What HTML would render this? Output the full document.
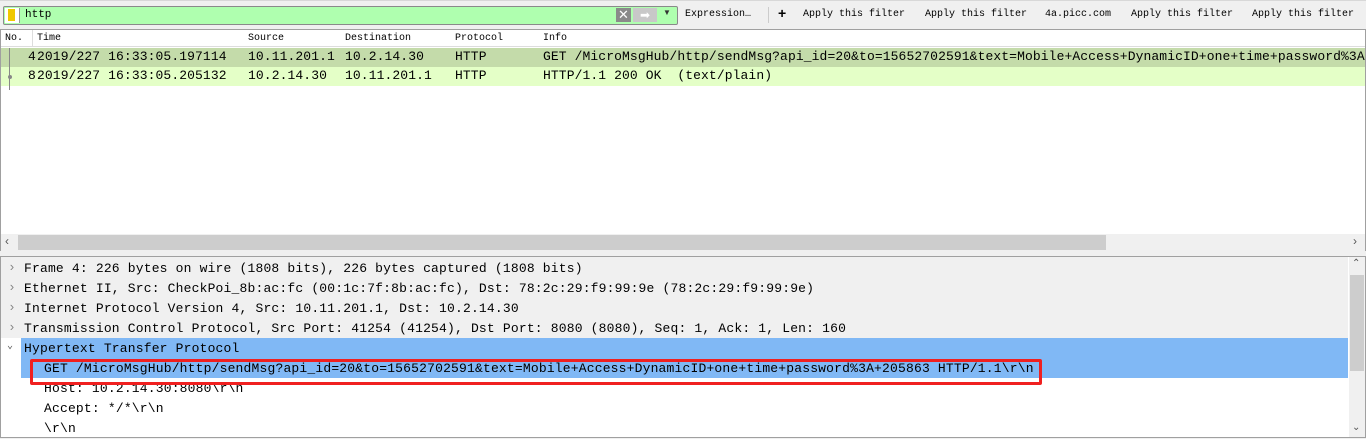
<!DOCTYPE html>
<html><head><style>
*{margin:0;padding:0;box-sizing:border-box}
body{width:1366px;height:439px;background:#f0f0f0;position:relative;overflow:hidden;font-family:"Liberation Mono",monospace}
.a{position:absolute;white-space:pre}
.ser{font-family:"Liberation Mono",monospace;font-size:10px;color:#000}
.m{font-size:13px;color:#000;letter-spacing:0.18px}
.p{font-size:13px;color:#000;letter-spacing:0.1px}
</style></head><body>
<div class="a" style="left:0;top:0;width:1366px;height:29px;background:#f0f0f0;border-top:1px solid #d8d8d8"></div>
<div class="a" style="left:3px;top:6px;width:675px;height:19px;background:#afffaf;border:1px solid #8a8a8a;border-radius:2px"></div>
<div class="a" style="left:5px;top:8px;width:15px;height:15px;background:#fff;border-right:1px solid #999"></div>
<div class="a" style="left:8px;top:9px;width:7px;height:12px;background:#f0c800"></div>
<div class="a ser" style="left:25px;top:9px;font-size:11px">http</div>
<div class="a" style="left:616px;top:8px;width:15px;height:14px;background:#8a8a8a;color:#fff;font:13px 'Liberation Sans';text-align:center;line-height:14px">✕</div>
<div class="a" style="left:633px;top:8px;width:24px;height:14px;background:#c8c8c8;color:#fff;font:12px 'Liberation Sans';text-align:center;line-height:14px">➡</div>
<div class="a" style="left:663px;top:8px;font:8px 'Liberation Sans';color:#333">▼</div>
<div class="a ser" style="left:685px;top:9px">Expression…</div>
<div class="a" style="left:768px;top:7px;width:1px;height:16px;background:#ccc"></div>
<div class="a" style="left:778px;top:5px;font:bold 14px 'Liberation Sans'">+</div>
<div class="a ser" style="left:803px;top:9px">Apply this filter</div>
<div class="a ser" style="left:925px;top:9px">Apply this filter</div>
<div class="a ser" style="left:1045px;top:9px">4a.picc.com</div>
<div class="a ser" style="left:1131px;top:9px">Apply this filter</div>
<div class="a ser" style="left:1252px;top:9px">Apply this filter</div>
<div class="a" style="left:0;top:29px;width:1366px;height:222px;background:#fff;border:1px solid #a0a0a0"></div>
<div class="a" style="left:1px;top:30px;width:1364px;height:17px;background:#fff;border-bottom:1px solid #ddd"></div>
<div class="a ser" style="left:5px;top:33px">No.</div>
<div class="a" style="left:32px;top:30px;width:1px;height:17px;background:#ddd"></div>
<div class="a ser" style="left:37px;top:33px">Time</div>
<div class="a ser" style="left:248px;top:33px">Source</div>
<div class="a ser" style="left:345px;top:33px">Destination</div>
<div class="a ser" style="left:455px;top:33px">Protocol</div>
<div class="a ser" style="left:543px;top:33px">Info</div>
<div class="a" style="left:1px;top:48px;width:1364px;height:19px;background:#c4dbaa"></div>
<div class="a" style="left:1px;top:67px;width:1364px;height:19px;background:#e4ffc7"></div>
<div class="a" style="left:9px;top:48px;width:1px;height:42px;background:#888"></div>
<div class="a" style="left:8px;top:75px;width:4px;height:4px;border-radius:2px;background:#888"></div>
<div class="a p" style="left:28px;top:49px">4</div>
<div class="a p" style="left:37px;top:49px">2019/227 16:33:05.197114</div>
<div class="a p" style="left:248px;top:49px">10.11.201.1</div>
<div class="a p" style="left:345px;top:49px">10.2.14.30</div>
<div class="a p" style="left:455px;top:49px">HTTP</div>
<div class="a p" style="left:543px;top:49px">GET /MicroMsgHub/http/sendMsg?api_id=20&amp;to=15652702591&amp;text=Mobile+Access+DynamicID+one+time+password%3A</div>
<div class="a p" style="left:28px;top:68px">8</div>
<div class="a p" style="left:37px;top:68px">2019/227 16:33:05.205132</div>
<div class="a p" style="left:248px;top:68px">10.2.14.30</div>
<div class="a p" style="left:345px;top:68px">10.11.201.1</div>
<div class="a p" style="left:455px;top:68px">HTTP</div>
<div class="a p" style="left:543px;top:68px">HTTP/1.1 200 OK  (text/plain)</div>
<div class="a" style="left:1px;top:234px;width:1364px;height:17px;background:#f0f0f0"></div>
<div class="a" style="left:18px;top:235px;width:1088px;height:15px;background:#cdcdcd"></div>
<div class="a" style="left:5px;top:234px;font:12px 'Liberation Sans';color:#555">‹</div>
<div class="a" style="left:1353px;top:234px;font:12px 'Liberation Sans';color:#555">›</div>
<div class="a" style="left:0;top:256px;width:1366px;height:182px;background:#fff;border:1px solid #a0a0a0"></div>
<div class="a" style="left:1px;top:257px;width:1347px;height:81px;background:#f0f0f0"></div>
<div class="a" style="left:21px;top:338px;width:1327px;height:40px;background:#80b8f5"></div>
<div class="a" style="left:1349px;top:257px;width:16px;height:180px;background:#f0f0f0"></div>
<div class="a" style="left:1350px;top:275px;width:14px;height:96px;background:#cdcdcd"></div>
<div class="a" style="left:1352px;top:258px;font:10px 'Liberation Sans';color:#555">⌃</div>
<div class="a" style="left:1352px;top:422px;font:10px 'Liberation Sans';color:#555">⌄</div>
<div class="a m" style="left:8px;top:260px;color:#888">›</div>
<div class="a m" style="left:8px;top:280px;color:#888">›</div>
<div class="a m" style="left:8px;top:300px;color:#888">›</div>
<div class="a m" style="left:8px;top:320px;color:#888">›</div>
<div class="a m" style="left:7px;top:340px;color:#555;font-size:10px">⌄</div>
<div class="a m" style="left:24px;top:261px">Frame 4: 226 bytes on wire (1808 bits), 226 bytes captured (1808 bits)</div>
<div class="a m" style="left:24px;top:281px">Ethernet II, Src: CheckPoi_8b:ac:fc (00:1c:7f:8b:ac:fc), Dst: 78:2c:29:f9:99:9e (78:2c:29:f9:99:9e)</div>
<div class="a m" style="left:24px;top:301px">Internet Protocol Version 4, Src: 10.11.201.1, Dst: 10.2.14.30</div>
<div class="a m" style="left:24px;top:321px">Transmission Control Protocol, Src Port: 41254 (41254), Dst Port: 8080 (8080), Seq: 1, Ack: 1, Len: 160</div>
<div class="a m" style="left:24px;top:341px">Hypertext Transfer Protocol</div>
<div class="a m" style="left:44px;top:361px">GET /MicroMsgHub/http/sendMsg?api_id=20&amp;to=15652702591&amp;text=Mobile+Access+DynamicID+one+time+password%3A+205863 HTTP/1.1\r\n</div>
<div class="a m" style="left:44px;top:381px">Host: 10.2.14.30:8080\r\n</div>
<div class="a m" style="left:44px;top:401px">Accept: */*\r\n</div>
<div class="a m" style="left:44px;top:421px">\r\n</div>
<div class="a" style="left:30px;top:359px;width:1012px;height:26px;border:3px solid #f02020;border-radius:2px"></div>
</body></html>
